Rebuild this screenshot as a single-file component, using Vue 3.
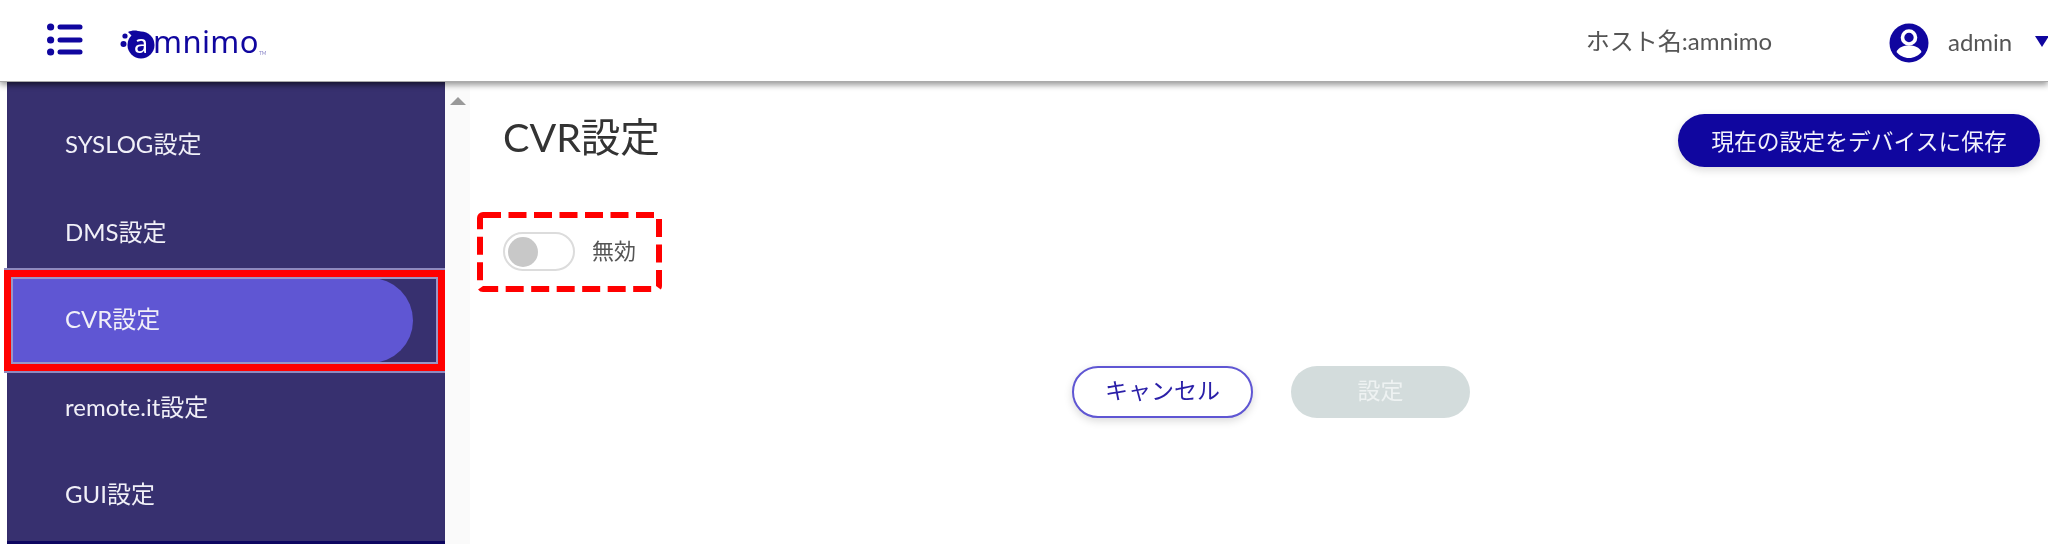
<script setup>
const menu = [
  { label: 'SYSLOG設定' },
  { label: 'DMS設定' },
  { label: 'CVR設定', active: true },
  { label: 'remote.it設定' },
  { label: 'GUI設定' }
]
</script>

<template>
  <div class="page">
    <header class="topbar">
      <svg class="burger" width="34" height="34" viewBox="0 0 34 34" aria-hidden="true">
        <g fill="#10069f">
          <circle cx="3.600" cy="4" r="3.600" />
          <circle cx="3.600" cy="17" r="3.600" />
          <circle cx="3.600" cy="29" r="3.600" />
        </g>
        <g stroke="#10069f" stroke-width="5" stroke-linecap="round">
          <line x1="13" y1="4" x2="33" y2="4" />
          <line x1="13" y1="17" x2="33" y2="17" />
          <line x1="13" y1="29" x2="33" y2="29" />
        </g>
      </svg>
      <div class="logo">
        <svg class="logo-mark" width="36" height="40" viewBox="0 -4 36 40" aria-hidden="true">
          <circle cx="22" cy="17" r="13.500" fill="#10069f" />
          <path d="M9 4c4-2 9-2 13 0l-5 8z" fill="#10069f" />
          <circle cx="6" cy="8" r="2.600" fill="#10069f" />
          <circle cx="4.500" cy="16" r="3" fill="#10069f" />
          <text x="22" y="24.500" text-anchor="middle" class="logo-a">a</text>
        </svg>
        <span class="logo-word">mnimo</span><span class="logo-tm">TM</span>
      </div>
      <div class="host">ホスト名:amnimo</div>
      <div class="user">
        <svg width="40" height="40" viewBox="0 0 40 40" aria-hidden="true">
          <circle cx="20" cy="20" r="19.500" fill="#10069f" />
          <circle cx="20" cy="14.500" r="6.500" fill="none" stroke="#fff" stroke-width="3.600" />
          <path d="M7.500 29c2-5 7-6.500 12.500-6.500s10.500 1.500 12.500 6.500c-3 3.500-7.500 6-12.500 6s-9.500-2.500-12.500-6z" fill="#fff" />
        </svg>
        <span class="user-name">admin</span>
        <span class="caret"></span>
      </div>
    </header>

    <div class="body">
      <nav class="sidebar">
        <ul class="menu">
          <li v-for="item in menu" :key="item.label" class="menu-item" :class="{ active: item.active }">
            <span class="pill" v-if="item.active"></span>
            <span class="menu-label">{{ item.label }}</span>
            <span class="red-box" v-if="item.active"></span>
          </li>
        </ul>
      </nav>
      <div class="scrollbar"><span class="scroll-up"></span></div>
      <main class="content">
        <div class="title-row">
          <h1 class="title">CVR設定</h1>
          <button class="save" type="button">現在の設定をデバイスに保存</button>
        </div>
        <div class="toggle-row">
          <span class="toggle"><span class="knob"></span></span>
          <span class="toggle-label">無効</span>
          <svg class="dash-box" width="185" height="80" viewBox="0 0 185 80" aria-hidden="true">
            <rect x="3" y="3" width="179" height="74" rx="3" fill="none" stroke="#ff0000" stroke-width="6" stroke-dasharray="18 7.500" />
          </svg>
        </div>
        <div class="actions">
          <button class="btn cancel" type="button">キャンセル</button>
          <button class="btn submit" type="button">設定</button>
        </div>
      </main>
    </div>
  </div>
</template>

<style scoped>
.page {
  width: 2048px;
  height: 544px;
  overflow: hidden;
  background: #fff;
  display: flex;
  flex-direction: column;
  font-family: Lato, "Noto Sans CJK JP", sans-serif;
  color: #444;
  filter: blur(0.45px);
}
.topbar {
  height: 81px;
  flex: none;
  display: flex;
  align-items: center;
  position: relative;
  z-index: 2;
  background: #fff;
  box-shadow: 0 1px 0 #aaa, 0 4px 6px rgba(0, 0, 0, 0.4);
  padding-left: 47px;
}
.burger {
  flex: none;
  overflow: visible;
  margin-top: -1px;
}
.logo {
  display: flex;
  align-items: center;
  margin-left: 38px;
  height: 40px;
  margin-top: 6px;
}
.logo-mark {
  flex: none;
  margin-right: -2px;
}
.logo-a {
  font-family: "Noto Sans", sans-serif;
  font-size: 25px;
  fill: #fff;
}
.logo-word {
  font-family: "Noto Sans", sans-serif;
  font-size: 31px;
  line-height: 40px;
  letter-spacing: 0.4px;
  color: #10069f;
  margin-top: -5px;
}
.logo-tm {
  font-size: 5px;
  color: #8a86c8;
  align-self: flex-end;
  margin-bottom: 8px;
}
.host {
  margin-left: auto;
  font-size: 24px;
  color: #555;
  margin-top: -3px;
}
.user {
  display: flex;
  align-items: center;
  margin-left: 117px;
  width: 159px;
  flex: none;
  margin-top: 5px;
}
.user svg {
  flex: none;
}
.user-name {
  font-size: 24px;
  color: #555;
  margin-left: 19px;
  margin-top: -4px;
}
.caret {
  flex: none;
  width: 0;
  height: 0;
  margin-left: 23px;
  margin-top: -4px;
  border-left: 7.500px solid transparent;
  border-right: 7.500px solid transparent;
  border-top: 11px solid #10069f;
}
.body {
  flex: 1;
  min-height: 0;
  display: flex;
  padding-left: 7px;
}
.sidebar {
  width: 438px;
  flex: none;
  background: #37306f;
  padding-top: 20px;
  border-bottom: 3px solid #0d0660;
  box-sizing: border-box;
  height: 463px;
  box-shadow: inset 0 6px 5px -3px rgba(0, 0, 0, 0.3);
}
.menu {
  list-style: none;
  margin: 0;
  padding: 0;
}
.menu-item {
  height: 87.500px;
  display: flex;
  align-items: center;
  padding: 0 0 4px 58px;
  position: relative;
  box-sizing: border-box;
  font-size: 24px;
  color: #f1f0f8;
}
.pill {
  position: absolute;
  left: 4px;
  top: 2px;
  bottom: 1px;
  right: 32px;
  background: #5f56d3;
  border-radius: 0 43px 43px 0;
}
.menu-label {
  position: relative;
}
.red-box {
  position: absolute;
  left: -3px;
  right: 0;
  top: -6px;
  bottom: -7px;
  border: 7px solid #ff0000;
  box-shadow: inset 0 0 0 2px #9a96c6, 0 -2px 0 #8e89bf, 0 2px 0 #8e89bf;
  pointer-events: none;
}
.scrollbar {
  width: 25px;
  flex: none;
  background: #fafafa;
  display: flex;
  justify-content: center;
  padding-top: 16px;
  box-sizing: border-box;
}
.scroll-up {
  width: 0;
  height: 0;
  border-left: 8px solid transparent;
  border-right: 8px solid transparent;
  border-bottom: 8px solid #999;
}
.content {
  flex: 1;
  min-width: 0;
  padding: 33px 8px 0 33px;
  box-sizing: border-box;
}
.title-row {
  display: flex;
  justify-content: space-between;
  align-items: flex-start;
}
.title {
  margin: 0;
  font-size: 39.500px;
  font-weight: 400;
  line-height: 46px;
  color: #333;
}
.save {
  width: 362px;
  height: 53px;
  border: 0;
  border-radius: 27px;
  background: #10069f;
  color: #f2f2fb;
  font: inherit;
  font-size: 22.800px;
  padding: 0;
  box-shadow: 0 3px 8px rgba(0, 0, 0, 0.15);
}
.toggle-row {
  position: relative;
  display: flex;
  align-items: center;
  margin-top: 65px;
  height: 39px;
}
.toggle {
  width: 72px;
  height: 39px;
  box-sizing: border-box;
  border: 2px solid #dcdcdc;
  border-radius: 20px;
  background: #fff;
  display: flex;
  align-items: center;
  padding-left: 3px;
}
.knob {
  width: 30px;
  height: 30px;
  border-radius: 50%;
  background: #c8c8c8;
}
.toggle-label {
  margin: -5px 0 0 17px;
  font-size: 22px;
  color: #555;
}
.dash-box {
  position: absolute;
  left: -26px;
  top: -20px;
}
.actions {
  display: flex;
  justify-content: center;
  gap: 38px;
  margin-top: 95px;
  padding-right: 1px;
}
.btn {
  height: 52px;
  border-radius: 26px;
  font: inherit;
  font-size: 23px;
  padding: 0 0 6px;
  box-sizing: border-box;
}
.cancel {
  width: 181px;
  background: #fff;
  border: 2px solid #5f56d3;
  color: #2a1fa8;
  box-shadow: 0 3px 8px rgba(0, 0, 0, 0.15);
}
.submit {
  width: 179px;
  background: #d3dcdc;
  border: 0;
  color: #eef2f2;
}
</style>
